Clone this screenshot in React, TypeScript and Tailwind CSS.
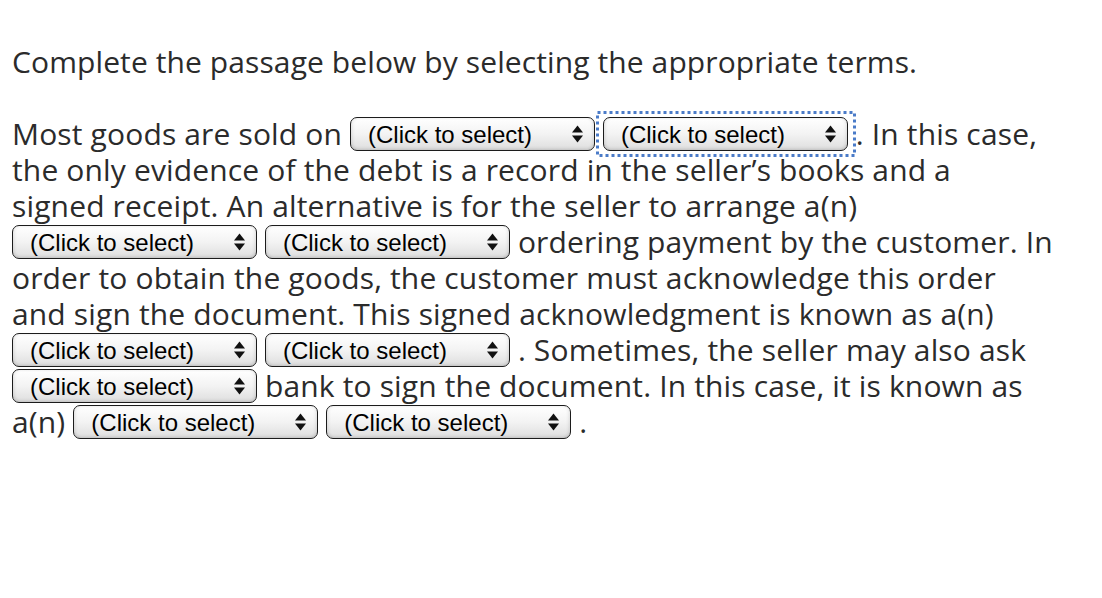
import React from "react";

function Sel({ focus = false }: { focus?: boolean }) {
  return (
    <span className="relative inline-block align-top mt-[1px] tracking-normal">
      <span
        className="flex items-center justify-between w-[245px] h-[34px] rounded-[7px] border-[1.5px] border-[#1c1c1c] bg-gradient-to-b from-[#ffffff] via-[#f3f3f3] to-[#dedede] shadow-[inset_2px_0_3px_rgba(0,0,0,0.06),inset_-2px_0_3px_rgba(0,0,0,0.06),inset_0_-2px_3px_rgba(0,0,0,0.06)] pl-[17px] pr-[10px] text-[24px] leading-none text-black"
        style={{ fontFamily: '"Liberation Sans", Arial, sans-serif' }}
      >
        <span className="pt-[1px]">(Click to select)</span>
        <svg width="13" height="20" viewBox="0 0 13 20" className="shrink-0">
          <path d="M6.5 1.5 L12 8.5 H1 Z" fill="#111" />
          <path d="M6.5 18.5 L12 11.5 H1 Z" fill="#111" />
        </svg>
      </span>
      {focus && (
        <svg
          className="absolute -left-[7px] -top-[6px] pointer-events-none"
          width="260"
          height="46"
          viewBox="0 0 260 46"
        >
          <rect
            x="1.5"
            y="1.5"
            width="257"
            height="43"
            fill="none"
            stroke="#4a7bc8"
            strokeWidth="3"
            strokeDasharray="3 3"
          />
        </svg>
      )}
    </span>
  );
}

export default function App() {
  return (
    <div
      className="w-[1102px] h-[598px] bg-white px-3 pt-[44px] text-[#2b2b2b]"
      style={{ fontFamily: '"Open Sans", "Noto Sans", sans-serif' }}
    >
      <p className="text-[30px] leading-[36px] tracking-[0.1px]">
        Complete the passage below by selecting the appropriate terms.
      </p>
      <p className="mt-[36px] w-[1045px] text-[30px] leading-[36px] tracking-[0.15px]">
        Most goods are sold on <Sel /> <Sel focus /> . In this case, the only evidence of the debt
        is a record in the seller’s books and a
        <br />
        signed receipt. An alternative is for the seller to arrange a(n) <Sel /> <Sel /> ordering
        payment by the customer. In order to obtain the goods, the customer must acknowledge this
        order
        <br />
        and sign the document. This signed acknowledgment is known as a(n) <Sel /> <Sel /> .
        Sometimes, the seller may also ask <Sel /> bank to sign the document. In this case, it is
        known as a(n) <Sel /> <Sel /> .
      </p>
    </div>
  );
}
